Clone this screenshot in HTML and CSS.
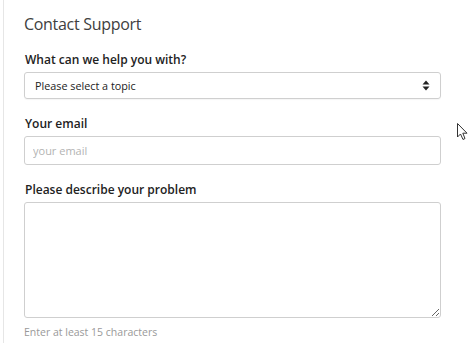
FILE: index.html
```
<!DOCTYPE html>
<html>
<head>
<meta charset="utf-8">
<link rel="stylesheet" href="styles.css">
</head>
<body>
<div class="panel">
  <h1 class="title">Contact Support</h1>
  <form class="form">
    <div class="field">
      <label class="label">What can we help you with?</label>
      <div class="select">
        <span class="select-text">Please select a topic</span>
        <svg class="select-arrows" width="8" height="11" viewBox="0 0 8 11"><path d="M4 0.5 L7.5 4.5 L0.5 4.5 Z M4 10.5 L7.5 6.5 L0.5 6.5 Z" fill="#222"/></svg>
      </div>
    </div>
    <div class="field">
      <label class="label">Your email</label>
      <input class="input" type="text" placeholder="your email">
    </div>
    <div class="field">
      <label class="label">Please describe your problem</label>
      <textarea class="textarea"></textarea>
      <div class="hint">Enter at least 15 characters</div>
    </div>
  </form>
</div>
<svg class="cursor" width="14" height="20" viewBox="0 0 14 20"><path d="M1.5 1.5 L1.5 15 L4.5 12 L7 17.5 L9 16.5 L6.8 11.2 L11 11.2 Z" fill="#fff" stroke="#333" stroke-width="1" stroke-linejoin="round"/></svg>
</body>
</html>
```
FILE: styles.css
```
html, body {
  margin: 0;
  padding: 0;
  background: #fff;
}
body {
  font-family: "Open Sans", "Noto Sans", sans-serif;
  color: #333;
  width: 474px;
  height: 343px;
  overflow: hidden;
  position: relative;
}
.panel {
  margin-left: 3px;
  border-left: 1px solid #e6e6e6;
  padding: 13px 0 0 20px;
  width: 417px;
  height: 330px;
}
.title {
  margin: 0;
  font-size: 16px;
  letter-spacing: -0.3px;
  font-weight: 400;
  line-height: 23px;
  color: #404040;
}
.form {
  margin-top: 15px;
}
.field {
  margin-bottom: 16px;
}
.label {
  display: block;
  font-size: 12px;
  font-weight: 600;
  line-height: 18px;
  color: #222;
  margin-bottom: 3px;
  padding-left: 1px;
}
.select {
  box-sizing: border-box;
  height: 27px;
  border: 1px solid #cfcfcf;
  border-radius: 3px;
  display: flex;
  align-items: center;
  justify-content: space-between;
  padding: 0 10px 0 10px;
  box-shadow: 0 1px 1px rgba(0,0,0,0.04);
}
.select-text {
  font-size: 10.8px;
  color: #222;
}
.input {
  display: block;
  box-sizing: border-box;
  width: 100%;
  height: 29px;
  border: 1px solid #cfcfcf;
  border-radius: 3px;
  padding: 0 8px;
  font-family: inherit;
  font-size: 11px;
  outline: none;
}
.input::placeholder {
  color: #b3b3b3;
}
.textarea {
  display: block;
  box-sizing: border-box;
  width: 100%;
  height: 116px;
  border: 1px solid #cfcfcf;
  border-radius: 3px;
  margin: 0;
  font-family: inherit;
  font-size: 11px;
  outline: none;
}
.hint {
  margin-top: 7px;
  font-size: 10.5px;
  color: #999;
  line-height: 14px;
}
.cursor {
  position: absolute;
  left: 456px;
  top: 122px;
}
```
